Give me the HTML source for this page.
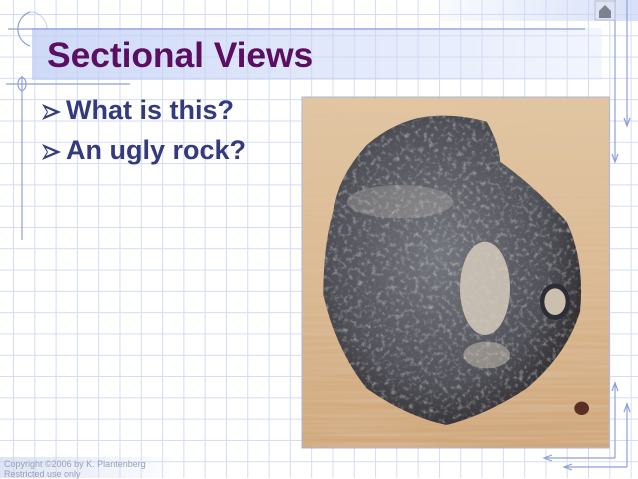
<!DOCTYPE html>
<html><head><meta charset="utf-8"><style>
html,body{margin:0;padding:0}
body{width:638px;height:478px;position:relative;overflow:hidden;background:#fff;font-family:"Liberation Sans",sans-serif}
.grid{position:absolute;inset:0;background-image:linear-gradient(to right,#d3dcf2 1px,transparent 1px),linear-gradient(to bottom,#d3dcf2 1px,transparent 1px);background-size:21.3px 21.3px;background-position:13px 14px}
.band{position:absolute;left:32px;top:28px;width:570px;height:52px;background:linear-gradient(to right,rgba(190,205,245,.75),rgba(220,228,250,.35))}
.topband{position:absolute;left:440px;top:0;width:198px;height:21px;background:linear-gradient(to right,rgba(225,232,250,.2),rgba(200,212,245,.7))}
h1{position:absolute;left:47px;top:35px;margin:0;font-size:35.5px;font-weight:bold;color:#5b0e62;letter-spacing:-0.1px}
.b{position:absolute;left:66px;font-size:27px;font-weight:bold;color:#333a7e}
.copy{position:absolute;left:0;top:457px;width:170px;height:21px;background:linear-gradient(to right,rgba(200,210,240,.6),rgba(230,235,250,.1));font-size:9px;color:#98a0b4;line-height:10px;padding-left:4px;box-sizing:border-box;padding-top:2px}
</style></head><body>
<div class="grid"></div>
<div class="topband"></div>
<div class="band"></div>
<svg style="position:absolute;left:0;top:0" width="638" height="478">
<g fill="none" stroke="#8f9fdb" stroke-width="1.2">
<line x1="8" y1="29" x2="585" y2="29"/>
<path d="M30 12 A18 18 0 0 0 30 46"/>
<path d="M47 29 A17 17 0 0 0 30 12" stroke-opacity=".4"/>
<line x1="6" y1="84" x2="130" y2="84"/>
<path d="M22 77 A8 8 0 0 0 22 91 A8 8 0 0 0 22 77"/>
<line x1="22" y1="76" x2="22" y2="240"/>
<line x1="615" y1="0" x2="615" y2="160"/><path d="M612 154 L615 162 L618 154"/>
<line x1="627" y1="0" x2="627" y2="125"/><path d="M624 118 L627 126 L630 118"/>
<line x1="615" y1="382" x2="615" y2="458"/><path d="M612 391 L615 383 L618 391"/>
<line x1="627" y1="403" x2="627" y2="467"/><path d="M624 412 L627 404 L630 412"/>
<line x1="545" y1="458" x2="615" y2="458"/><path d="M552 455 L544 458 L552 461"/>
<line x1="565" y1="467" x2="627" y2="467"/><path d="M572 464 L564 467 L572 470"/>
</g>
<rect x="595" y="1" width="20" height="19" fill="#dfe4f2" stroke="#b8c0d8"/>
<path d="M599 11 L605 5 L611 11 L611 18 L599 18Z" fill="#7d8290"/>
<g fill="#333a7e">
<path d="M42 104 L61 112 L42 120 L47 112Z"/>
<path d="M42 144 L61 152 L42 160 L47 152Z"/>
</g>
<g fill="#fff">
<path d="M46 108 L55 112 L46 116 L48 112Z"/>
<path d="M46 148 L55 152 L46 156 L48 152Z"/>
</g>
</svg>
<h1>Sectional Views</h1>
<div class="b" style="top:95px">What is this?</div>
<div class="b" style="top:135px">An ugly rock?</div>
<svg style="position:absolute;left:300px;top:95px" width="312" height="356" viewBox="0 0 936 1068">
<defs>
<linearGradient id="w" x1="0" y1="0" x2="0" y2="1">
<stop offset="0" stop-color="#e2c6a2"/><stop offset=".5" stop-color="#dbb992"/><stop offset="1" stop-color="#cfa67a"/></linearGradient>
<filter id="wt"><feTurbulence type="fractalNoise" baseFrequency=".002 .09" numOctaves="2" seed="5"/><feColorMatrix values="0 0 0 0 .72 0 0 0 0 .55 0 0 0 0 .38 0 0 0 1.2 -.45"/><feComposite in2="SourceGraphic" operator="in"/></filter>
<radialGradient id="r" cx=".45" cy=".45" r=".6"><stop offset="0" stop-color="#74767e"/><stop offset=".7" stop-color="#505159"/><stop offset="1" stop-color="#2e2a2c"/></radialGradient>
<filter id="n"><feTurbulence type="fractalNoise" baseFrequency=".07" numOctaves="4" seed="3"/><feColorMatrix values="0 0 0 0 .85 0 0 0 0 .83 0 0 0 0 .80 0 0 0 1.4 -.7"/><feComposite in2="SourceGraphic" operator="in"/></filter>
</defs>
<rect x="6" y="6" width="922" height="1053" fill="url(#w)" stroke="#aab4d8" stroke-width="3"/>
<rect x="6" y="6" width="922" height="1053" fill="#fff" filter="url(#wt)"/>
<path d="M350 70 Q450 50 560 80 Q600 150 600 200 Q700 270 800 380 Q855 500 840 650 Q800 780 680 880 Q560 960 440 990 Q320 965 200 880 Q110 770 70 600 Q70 450 100 350 Q110 250 200 150 Q270 90 350 70Z" fill="url(#r)"/>
<path d="M350 70 Q450 50 560 80 Q600 150 600 200 Q700 270 800 380 Q855 500 840 650 Q800 780 680 880 Q560 960 440 990 Q320 965 200 880 Q110 770 70 600 Q70 450 100 350 Q110 250 200 150 Q270 90 350 70Z" fill="#fff" filter="url(#n)" opacity=".8"/>
<ellipse cx="300" cy="320" rx="160" ry="50" fill="#c8c0b8" opacity=".3"/>
<ellipse cx="555" cy="580" rx="75" ry="140" fill="#d6cbbd" opacity=".85"/>
<ellipse cx="560" cy="780" rx="70" ry="40" fill="#cfc5b6" opacity=".5"/>
<ellipse cx="765" cy="620" rx="45" ry="55" fill="#2c2d36"/>
<ellipse cx="765" cy="620" rx="32" ry="40" fill="#cbbfae"/>
<ellipse cx="845" cy="940" rx="22" ry="20" fill="#5a2e22"/>
</svg>
<div class="copy">Copyright ©2006 by K. Plantenberg<br>Restricted use only</div>
</body></html>
